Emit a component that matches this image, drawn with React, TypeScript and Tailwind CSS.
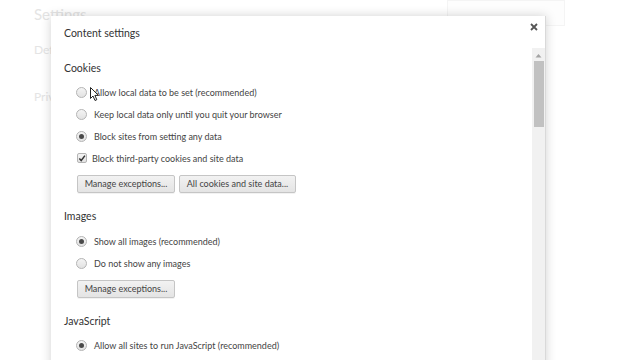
import React from "react";

const font = { fontFamily: 'Lato, "Open Sans", Arial, sans-serif' };

function Radio({ checked }: { checked?: boolean }) {
  return (
    <span className="w-[11px] h-[11px] rounded-full border border-[#b4b4b4] bg-gradient-to-b from-[#f4f4f4] to-[#e2e2e2] flex items-center justify-center shrink-0">
      {checked && <span className="w-[5px] h-[5px] rounded-full bg-[#4a4a4a]" />}
    </span>
  );
}

function Checkbox() {
  return (
    <span className="w-[10px] h-[10px] rounded-[2px] border border-[#b4b4b4] bg-gradient-to-b from-[#f4f4f4] to-[#e2e2e2] flex items-center justify-center shrink-0">
      <svg width="9" height="9" viewBox="0 0 9 9">
        <path d="M1.5 4.5 L3.6 6.8 L7.8 1.2" stroke="#333" strokeWidth="1.6" fill="none" />
      </svg>
    </span>
  );
}

function RadioRow({ label, checked }: { label: string; checked?: boolean }) {
  return (
    <div className="h-[22px] flex items-center pl-[25px] gap-[7px]">
      <Radio checked={checked} />
      <span className="pt-[1px] text-[9px] text-[#444] whitespace-nowrap">{label}</span>
    </div>
  );
}

function Btn({ label, w }: { label: string; w: string }) {
  return (
    <div
      className={`h-[18px] ${w} border border-[#c5c5c5] rounded-[2px] bg-gradient-to-b from-[#f2f2f2] to-[#e4e4e4] shadow-[0_1px_0_rgba(0,0,0,0.05)] flex items-center justify-center text-[9px] text-[#444] whitespace-nowrap`}
    >
      {label}
    </div>
  );
}

function Heading({ children, mt }: { children: React.ReactNode; mt: string }) {
  return (
    <div className={`${mt} h-[16px] flex items-center pt-[2px] pl-[13px] text-[10.5px] text-[#333]`}>
      {children}
    </div>
  );
}

export default function App() {
  return (
    <div className="w-[640px] h-[360px] relative overflow-hidden bg-white" style={font}>
      {/* background page, faded */}
      <div className="flex flex-col pl-[34px] text-[#e4e4e4]">
        <div className="h-[28px] flex items-center text-[15px]">Settings</div>
        <div className="mt-[14px] h-[16px] flex items-center text-[12px]">Default</div>
        <div className="mt-[31px] h-[16px] flex items-center text-[12px]">Privacy</div>
      </div>
      <div className="absolute left-[447px] top-0 w-[118px] h-[26px] border border-[#f4f4f4] bg-[#fdfdfd]" />

      {/* dialog */}
      <div className="absolute left-[51px] top-[16px] w-[495px] h-[360px] bg-white border-r border-[#d9d9d9] shadow-[0_0_10px_rgba(0,0,0,0.18)] flex flex-col">
        <div className="h-[32px] flex justify-between pl-[13px] pr-[7px]">
          <span className="self-center pt-[3px] text-[10.5px] text-[#333]">Content settings</span>
          <svg width="8" height="8" viewBox="0 0 8 8" className="mt-[7px]">
            <path d="M1 1 L7 7 M7 1 L1 7" stroke="#555" strokeWidth="1.8" />
          </svg>
        </div>
        <div className="flex-1 flex">
          <div className="flex-1 flex flex-col pt-[12px]">
            <Heading mt="mt-0">Cookies</Heading>
            <div className="mt-[5px]">
              <RadioRow label="Allow local data to be set (recommended)" />
              <RadioRow label="Keep local data only until you quit your browser" />
              <RadioRow label="Block sites from setting any data" checked />
              <div className="h-[22px] flex items-center pl-[26px] gap-[5px]">
                <Checkbox />
                <span className="pt-[1px] text-[9px] text-[#444] whitespace-nowrap">Block third-party cookies and site data</span>
              </div>
            </div>
            <div className="mt-[6px] pl-[26px] flex gap-[4px]">
              <Btn label="Manage exceptions..." w="w-[98px]" />
              <Btn label="All cookies and site data..." w="w-[117px]" />
            </div>
            <Heading mt="mt-[15px]">Images</Heading>
            <div className="mt-[6px]">
              <RadioRow label="Show all images (recommended)" checked />
              <RadioRow label="Do not show any images" />
            </div>
            <div className="mt-[6px] pl-[26px] flex">
              <Btn label="Manage exceptions..." w="w-[98px]" />
            </div>
            <Heading mt="mt-[15px]">JavaScript</Heading>
            <div className="mt-[5px]">
              <RadioRow label="Allow all sites to run JavaScript (recommended)" checked />
            </div>
          </div>
          <div className="w-[13px] bg-[#f1f1f1] flex flex-col items-center">
            <svg width="7" height="5" viewBox="0 0 7 5" className="mt-[5px]">
              <path d="M0.5 4.5 L3.5 1 L6.5 4.5 Z" fill="#a3a3a3" />
            </svg>
            <div className="mt-[3px] w-[10px] h-[66px] bg-[#c1c1c1]" />
          </div>
        </div>
      </div>

      {/* mouse cursor */}
      <svg className="absolute left-[90px] top-[87px]" width="10" height="15" viewBox="0 0 10 15">
        <path d="M0.5 0.5 L0.5 11.5 L3 9 L5 13.5 L6.8 12.7 L4.9 8.4 L8.5 8.4 Z" fill="#fff" stroke="#222" strokeWidth="1" />
      </svg>
    </div>
  );
}
